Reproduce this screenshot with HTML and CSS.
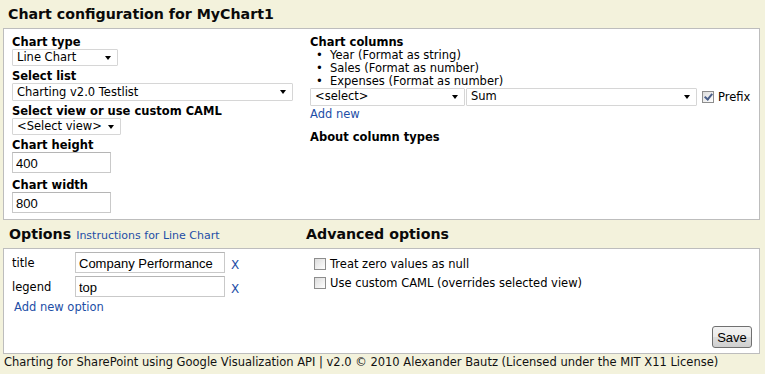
FILE: index.html
```html
<!DOCTYPE html>
<html>
<head>
<meta charset="utf-8">
<link rel="stylesheet" href="styles.css">
</head>
<body>
<h1 class="title">Chart configuration for MyChart1</h1>
<div class="box top-box">
  <div class="col left">
    <div class="label">Chart type</div>
    <span class="sel w-type"><select><option>Line Chart</option></select></span>
    <div class="label">Select list</div>
    <span class="sel w-list"><select><option>Charting v2.0 Testlist</option></select></span>
    <div class="label">Select view or use custom CAML</div>
    <span class="sel w-view"><select><option>&lt;Select view&gt;</option></select></span>
    <div class="label">Chart height</div>
    <input class="txt w-num" type="text" value="400">
    <div class="label">Chart width</div>
    <input class="txt w-num" type="text" value="800">
  </div>
  <div class="col right">
    <div class="label">Chart columns</div>
    <ul class="cols">
      <li>Year (Format as string)</li>
      <li>Sales (Format as number)</li>
      <li>Expenses (Format as number)</li>
    </ul>
    <div class="colrow">
      <span class="sel w-colsel"><select class="small"><option>&lt;select&gt;</option></select></span>
      <span class="sel w-agg"><select><option>Sum</option></select></span>
      <label class="chk"><input type="checkbox" class="cb checked" checked>Prefix</label>
    </div>
    <a class="link addnew" href="#">Add new</a>
    <div class="label about">About column types</div>
  </div>
</div>
<div class="heads">
  <div class="head"><h2>Options</h2><a class="link instr" href="#">Instructions for Line Chart</a></div>
  <div class="head"><h2>Advanced options</h2></div>
</div>
<div class="box bottom-box">
  <div class="col left">
    <div class="optrow"><span class="optname">title</span><input class="txt w-opt" type="text" value="Company Performance"><a class="link x" href="#">X</a></div>
    <div class="optrow"><span class="optname">legend</span><input class="txt w-opt" type="text" value="top"><a class="link x" href="#">X</a></div>
    <a class="link addopt" href="#">Add new option</a>
  </div>
  <div class="col right adv">
    <label class="chk row"><input type="checkbox" class="cb">Treat zero values as null</label>
    <label class="chk row"><input type="checkbox" class="cb">Use custom CAML (overrides selected view)</label>
    <div class="savebar"><button class="save">Save</button></div>
  </div>
</div>
<div class="footer">Charting for SharePoint using Google Visualization API | v2.0 © 2010 Alexander Bautz (Licensed under the MIT X11 License)</div>
</body>
</html>
```
FILE: styles.css
```css
html, body {
  margin: 0;
  padding: 0;
}
body {
  background: #f3f2dc;
  font-family: "DejaVu Sans", Verdana, sans-serif;
  font-size: 11.5px;
  color: #000;
  width: 765px;
  height: 374px;
  overflow: hidden;
}
.title {
  margin: 0;
  padding: 4px 0 0 8px;
  height: 28px;
  box-sizing: border-box;
  font-size: 14.2px;
  line-height: 20px;
  font-weight: bold;
  color: #0a0a0a;
}
.box {
  margin: 0 5px 0 3px;
  border: 1px solid #bdbdbd;
  background: #fff;
  display: flex;
}
.top-box {
  padding: 6px 0 0 0;
  box-sizing: border-box;
  height: 192px;
}
.col.left {
  width: 306px;
  padding-left: 8px;
  box-sizing: border-box;
  flex: none;
}
.col.right {
  flex: 1;
}
.label {
  font-weight: bold;
  font-size: 11.5px;
  line-height: 14px;
}
.sel {
  display: block;
  position: relative;
  height: 17px;
  margin-bottom: 3px;
}
.sel select {
  -webkit-appearance: none;
  appearance: none;
  width: 100%;
  height: 100%;
  margin: 0;
  border: 1px solid #d6d6d6;
  border-radius: 1px;
  background: #fff;
  font-family: "DejaVu Sans", Verdana, sans-serif;
  font-size: 11.5px;
  color: #000;
  padding: 0 0 0 4px;
  box-sizing: border-box;
  line-height: 15px;
}
.sel::after {
  content: "";
  position: absolute;
  right: 7px;
  top: 7px;
  border-left: 3.5px solid transparent;
  border-right: 3.5px solid transparent;
  border-top: 4px solid #000;
  pointer-events: none;
}
.w-type { width: 106px; }
.w-list { width: 281px; height: 18px; }
.w-view { width: 109px; }
.txt {
  display: block;
  box-sizing: border-box;
  height: 21px;
  margin: 0 0 5px 0;
  border: 1px solid #c9c9c9;
  border-top-color: #b5b5b5;
  padding: 1px 2px 0 3px;
  font-family: "Liberation Sans", Arial, sans-serif;
  font-size: 13px;
  color: #000;
  background: #fff;
  outline: none;
}
.w-num { width: 99px; }
.cols {
  margin: 0;
  padding: 0 0 0 20px;
  line-height: 13px;
  list-style: none;
}
.cols li { position: relative; }
.cols li::before {
  content: "•";
  position: absolute;
  left: -14px;
}
.colrow {
  display: flex;
  align-items: center;
  margin-top: -1px;
  height: 19px;
}
.colrow .sel { margin: 0; height: 18px; }
.w-colsel { width: 155px; margin-right: 1px !important; }
.w-agg { width: 231px; }
.chk {
  display: inline-flex;
  align-items: center;
}
.colrow .chk { margin-left: 5px; }
.cb {
  -webkit-appearance: none;
  appearance: none;
  width: 12px;
  height: 12px;
  margin: 0 4px 0 0;
  border: 1px solid #8d8d8d;
  box-sizing: border-box;
  background: linear-gradient(135deg, #dcdcdc 0%, #f4f4f4 70%, #fff 100%);
  position: relative;
  flex: none;
}
.cb.checked::after {
  content: "";
  position: absolute;
  left: 3px;
  top: 0px;
  width: 3px;
  height: 6px;
  border: solid #4a5f8a;
  border-width: 0 2px 2px 0;
  transform: rotate(40deg);
}
.link {
  color: #1d4ea6;
  text-decoration: none;
}
.addnew {
  display: block;
  line-height: 14px;
  margin-top: 1px;
}
.about { margin-top: 9px; }
.heads {
  display: flex;
  height: 28px;
  align-items: center;
}
.head {
  display: flex;
  align-items: baseline;
}
.head:first-child { width: 306px; padding-left: 9px; box-sizing: border-box; }
.head h2 {
  margin: 0;
  font-size: 14.2px;
  font-weight: bold;
  line-height: 20px;
  color: #0a0a0a;
}
.instr {
  font-size: 11px;
  margin-left: 5px;
}
.bottom-box {
  height: 106px;
  box-sizing: border-box;
}
.bottom-box .col.left { padding-top: 3px; }
.optrow {
  display: flex;
  align-items: center;
  height: 21px;
  margin-bottom: 3px;
}
.optname {
  width: 63px;
}
.w-opt { width: 150px; margin: 0; }
.x {
  font-size: 12px;
  margin-left: 6px;
  position: relative;
  top: 2px;
}
.addopt {
  display: block;
  margin-left: 2px;
}
.adv {
  display: flex;
  flex-direction: column;
  padding: 8px 7px 5px 4px;
}
.adv .row { margin-bottom: 5px; line-height: 14px; }
.savebar {
  margin-top: auto;
  display: flex;
  justify-content: flex-end;
}
.save {
  width: 40px;
  height: 22px;
  border: 1px solid #707070;
  border-radius: 3px;
  background: linear-gradient(#f2f2f2 0%, #ebebeb 50%, #dddddd 51%, #cfcfcf 100%);
  font-family: "Liberation Sans", Arial, sans-serif;
  font-size: 13px;
  padding: 0;
  color: #000;
}
.footer {
  padding: 1px 0 0 4px;
  font-size: 11.5px;
  line-height: 15px;
  color: #111;
}
```
